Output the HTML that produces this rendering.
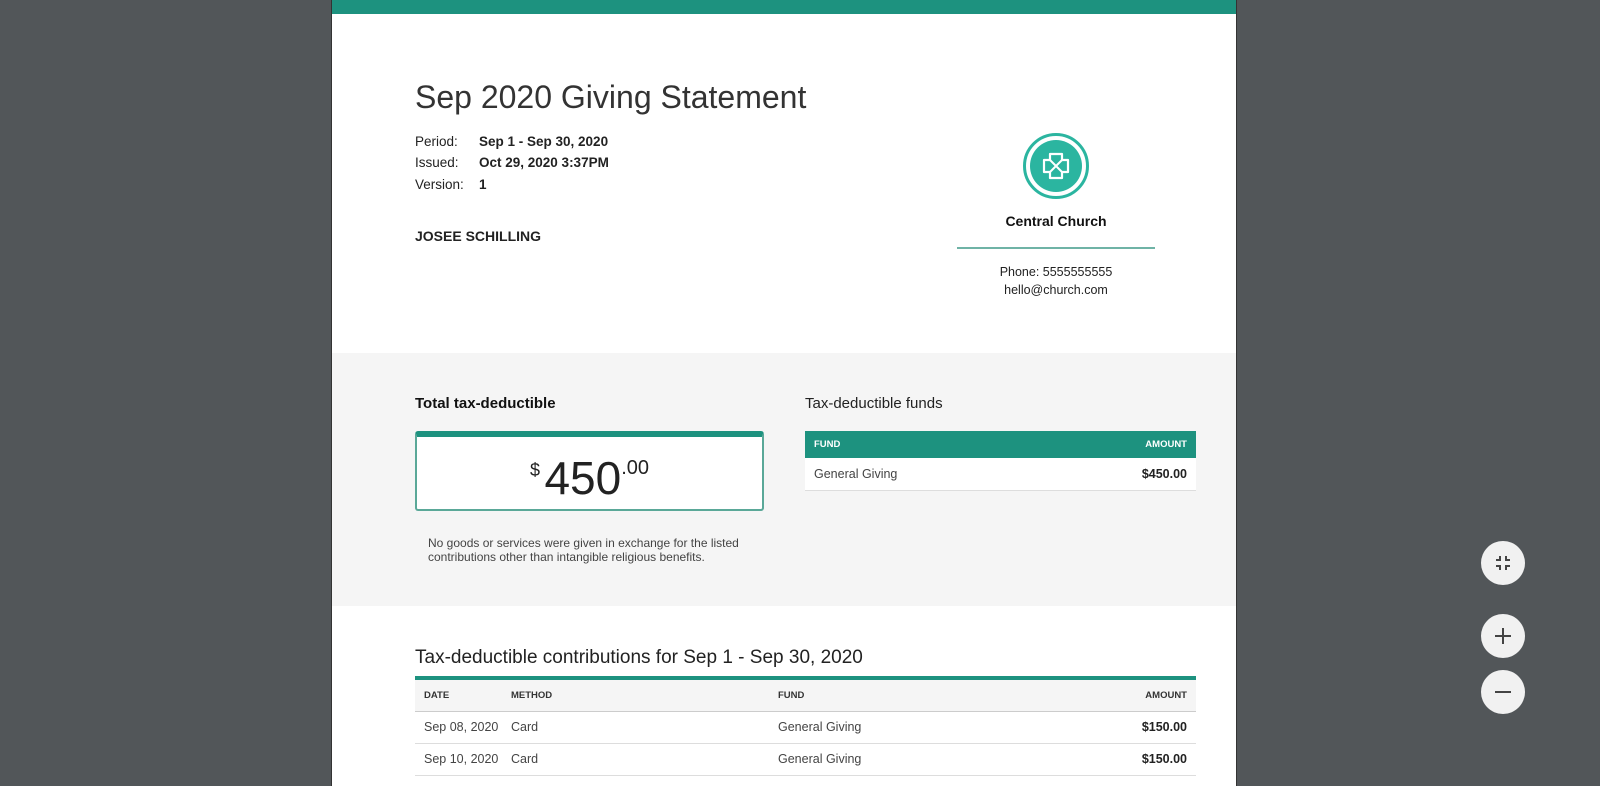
<!DOCTYPE html>
<html><head><style>
*{margin:0;padding:0;box-sizing:border-box}
body{width:1600px;height:786px;overflow:hidden;background:#525659;font-family:"Liberation Sans",sans-serif;color:#111;position:relative}
.page{position:absolute;left:331px;top:0;width:906px;height:786px;background:#fff;border-left:1px solid #333;border-right:1px solid #333}
.top{position:absolute;left:0;top:0;width:100%;height:14px;background:#1d927f}
.abs{position:absolute}
h1{position:absolute;left:83px;top:79px;font-size:32px;font-weight:normal;color:#333}
.meta{position:absolute;left:83px;font-size:13.5px;color:#222}
.meta b{position:absolute;left:64px;white-space:nowrap}
.gray{position:absolute;left:0;top:353px;width:100%;height:253px;background:#f5f5f5}
table{border-collapse:collapse;table-layout:fixed}
.btn{position:absolute;left:1481px;width:44px;height:44px;border-radius:50%;background:#f1f1f1;color:#444}
</style></head><body>
<div class="page">
<div class="top"></div>
<h1>Sep 2020 Giving Statement</h1>
<div class="meta" style="top:134px">Period:<b>Sep 1 - Sep 30, 2020</b></div>
<div class="meta" style="top:155px">Issued:<b>Oct 29, 2020 3:37PM</b></div>
<div class="meta" style="top:177px">Version:<b>1</b></div>
<div class="meta" style="top:228px;font-weight:bold;font-size:14px">JOSEE SCHILLING</div>

<svg class="abs" style="left:691px;top:133px" width="66" height="66" viewBox="0 0 66 66">
<circle cx="33" cy="33" r="31.5" fill="none" stroke="#2bb5a0" stroke-width="3"/>
<circle cx="33" cy="33" r="26" fill="#2bb5a0"/>
<path d="M27 21h12v6h6v12h-6v6H27v-6h-6V27h6z" fill="none" stroke="#fff" stroke-width="2.2" stroke-linejoin="round"/>
<path d="M27 27l12 12M39 27L27 39" stroke="#fff" stroke-width="2"/>
</svg>
<div class="abs" style="left:625px;top:213px;width:198px;text-align:center;font-weight:bold;font-size:14px">Central Church</div>
<div class="abs" style="left:625px;top:247px;width:198px;height:2px;background:#6fb3a6"></div>
<div class="abs" style="left:625px;top:263px;width:198px;text-align:center;font-size:12.5px;line-height:18px;color:#222">Phone: 5555555555<br>hello@church.com</div>

<div class="gray">
<div class="abs" style="left:83px;top:42px;font-weight:bold;font-size:15px">Total tax-deductible</div>
<div class="abs" style="left:83px;top:78px;width:349px;height:80px;background:#fff;border:2px solid #5aa898;border-top:6px solid #1d927f;border-radius:3px">
<div style="position:absolute;left:0;right:0;top:14px;text-align:center;color:#222"><span style="font-size:18px;vertical-align:18px">$</span> <span style="font-size:46px">450</span><span style="font-size:20px;vertical-align:20px">.00</span></div>
</div>
<div class="abs" style="left:96px;top:183px;font-size:12px;line-height:14px;color:#444;width:340px">No goods or services were given in exchange for the listed contributions other than intangible religious benefits.</div>
<div class="abs" style="left:473px;top:42px;font-size:15px;color:#222">Tax-deductible funds</div>
<table class="abs" style="left:473px;top:78px;width:391px;font-size:12.5px">
<tr style="background:#1d927f;color:#fff;height:27px;font-size:9.5px;font-weight:bold"><td style="padding-left:9px">FUND</td><td style="text-align:right;padding-right:9px">AMOUNT</td></tr>
<tr style="background:#fff;height:32px;border-bottom:1px solid #ddd;color:#444"><td style="padding-left:9px">General Giving</td><td style="text-align:right;padding-right:9px;font-weight:bold;color:#222">$450.00</td></tr>
</table>
</div>

<div class="abs" style="left:83px;top:647px;font-size:19px;color:#222">Tax-deductible contributions for Sep 1 - Sep 30, 2020</div>
<table class="abs" style="left:83px;top:676px;width:781px;font-size:12.5px;color:#444">
<colgroup><col style="width:96px"><col style="width:267px"><col><col style="width:120px"></colgroup>
<tr style="background:#f5f5f5;height:33px;font-size:9.5px;font-weight:bold;color:#333;border-top:4px solid #1d927f;border-bottom:1px solid #ccc"><td style="padding-left:9px">DATE</td><td>METHOD</td><td>FUND</td><td style="text-align:right;padding-right:9px">AMOUNT</td></tr>
<tr style="height:32px;border-bottom:1px solid #ddd"><td style="padding-left:9px">Sep 08, 2020</td><td>Card</td><td>General Giving</td><td style="text-align:right;padding-right:9px;font-weight:bold;color:#222">$150.00</td></tr>
<tr style="height:32px;border-bottom:1px solid #ddd"><td style="padding-left:9px">Sep 10, 2020</td><td>Card</td><td>General Giving</td><td style="text-align:right;padding-right:9px;font-weight:bold;color:#222">$150.00</td></tr>
</table>
</div>

<div class="btn" style="top:541px"><svg width="44" height="44"><path d="M19 15v4h-4M25 15v4h4M19 29v-4h-4M25 29v-4h4" fill="none" stroke="#444" stroke-width="2"/></svg></div>
<div class="btn" style="top:614px"><svg width="44" height="44"><path d="M22 14v16M14 22h16" stroke="#444" stroke-width="2"/></svg></div>
<div class="btn" style="top:670px"><svg width="44" height="44"><path d="M14 22h16" stroke="#444" stroke-width="2"/></svg></div>
</body></html>
